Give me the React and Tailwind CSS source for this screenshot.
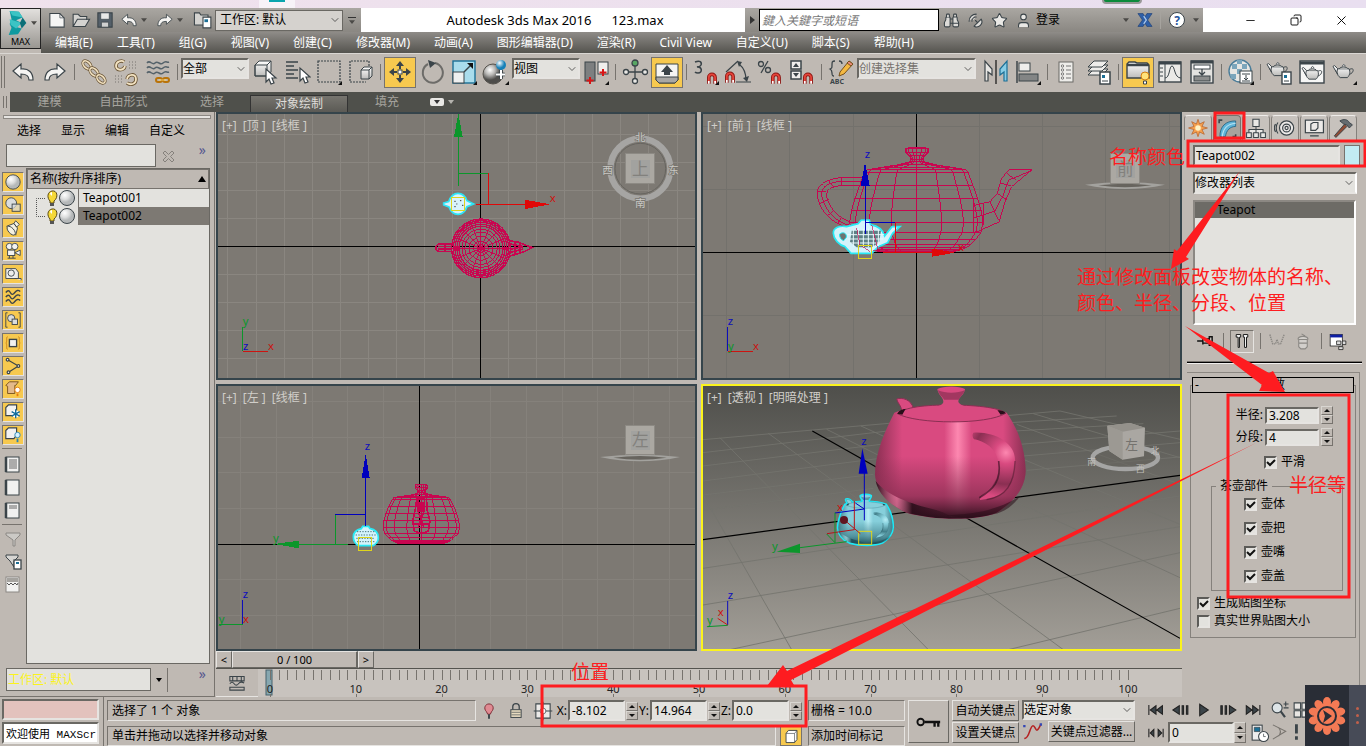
import { useState } from 'react';
import { Binoculars, SatelliteDish, Star, User, Minus, Copy, X, ChevronDown } from 'lucide-react';
import clsx from 'clsx';

const DARK = '#3b4449';
const PINK = '#c80650';

const MENUS = ['编辑(E)', '工具(T)', '组(G)', '视图(V)', '创建(C)', '修改器(M)', '动画(A)', '图形编辑器(D)', '渲染(R)', 'Civil View', '自定义(U)', '脚本(S)', '帮助(H)'];

const Svg = ({ size = 28, box = 28, className, children }) => (
  <svg width={size} height={size} viewBox={`0 0 ${box} ${box}`} fill="none" stroke={DARK} className={clsx('shrink-0', className)} aria-hidden="true">
    {children}
  </svg>
);

/* ---------- shared icon parts ---------- */

const Magnet = ({ x = 15, y = 15 }) => (
  <g transform={`translate(${x} ${y}) scale(.9)`}>
    <path d="M2 12V5a3.500 3.500 0 0 1 7 0v7" stroke="#8d1713" strokeWidth="4" />
    <path d="M2 9V5a3.500 3.500 0 0 1 7 0v4" stroke="#e5443a" strokeWidth="2" />
    <path d="M2 9v3M9 9v3" stroke="#fff" strokeWidth="2" />
  </g>
);

const Flyout = () => <path d="M27 23v4h-4z" fill="#111" stroke="none" />;

const ArrowShape = () => <path d="M4 13l8-7v5c8-1 12 4 12 11h-4c0-4-2-6-8-6v4z" fill="#f5f4f2" strokeWidth="1.200" />;

const Cursor = ({ x, y }) => <path transform={`translate(${x} ${y})`} d="M0 0v13l3-3 2 5 3-1-2-5h4z" fill="#fff" strokeWidth="1.200" />;

const Kettle = () => (
  <g fill="url(#metal)" strokeWidth="1.200">
    <path d="M7 12c-4-3-5-1-4 1s2 4 5 6M20 12c4-2 6-1 5 2s-4 4-6 4" fill="none" />
    <path d="M6 11l-4-4-2 1 6 10M6 11h14c2 4 1 8-2 11H9c-4-3-5-7-3-11z" />
    <path d="M8 11c1-3 9-3 11 0M12 8c0-3 3-3 3 0" />
  </g>
);

const ICONS = {
  undo: <ArrowShape />,
  redo: <g transform="translate(28 0) scale(-1 1)"><ArrowShape /></g>,
  link: (
    <g>
      {[[7, 7], [14, 14], [21, 21]].map(([x, y]) => (
        <g key={x} transform={`rotate(45 ${x} ${y})`}>
          <ellipse cx={x} cy={y} rx="5" ry="3" stroke="#6b5535" strokeWidth="3" />
          <ellipse cx={x} cy={y} rx="5" ry="3" stroke="#f3e3c2" strokeWidth="1.600" />
        </g>
      ))}
    </g>
  ),
  unlink: (
    <g>
      <path d="M13 8c-1 5-9 5-9 0s6-6 8-4M15 21c1-5 9-6 9 0s-6 6-9 4" stroke="#6b5535" strokeWidth="3.500" />
      <path d="M13 8c-1 5-9 5-9 0s6-6 8-4M15 21c1-5 9-6 9 0s-6 6-9 4" stroke="#f3e3c2" strokeWidth="1.800" />
      <path d="M17 4h8M17 7h8M17 10h8M3 18h8M3 21h8M3 24h8" stroke="#77736e" strokeDasharray="1 2" />
    </g>
  ),
  bind: (
    <g>
      {[5, 10, 15].map((y) => <path key={y} d={`M3 ${y}c3-4 5 3 8 0s5 3 8 0 4 0 6-1`} stroke="#55626a" strokeWidth="1.500" />)}
      <rect x="12" y="20" width="6" height="4" rx="2" stroke="#b97309" strokeWidth="2" />
      <rect x="19" y="20" width="6" height="4" rx="2" stroke="#b97309" strokeWidth="2" />
      <path d="M15 22h7" stroke="#ffd56a" />
    </g>
  ),
  select: (
    <g>
      <path d="M4 7l4-4h12v11l-4 4H4z" fill="url(#metal)" />
      <path d="M4 7h12v11H4zM16 7l4-4" />
      <Cursor x="15" y="11" />
    </g>
  ),
  byName: (
    <g>
      <path d="M3 4h12M3 8h8M3 12h12M3 16h8M3 20h12" strokeWidth="1.300" />
      <Cursor x="17" y="10" />
    </g>
  ),
  region: (
    <g>
      <rect x="3" y="3" width="22" height="21" strokeDasharray="2 1" strokeWidth="1.200" />
      <Flyout />
    </g>
  ),
  crossing: (
    <g>
      <path d="M22 8V3H3v21h16" strokeDasharray="2 1" strokeWidth="1.200" />
      <path d="M14 12l3-3h8v9l-3 3h-8zM14 12h8v9M22 12l3-3" fill="url(#metal)" />
    </g>
  ),
  move: (
    <g fill={DARK} stroke="none">
      <path d="M14 3l4 5h-3v3h-2V8h-3zM14 25l-4-5h3v-3h2v3h3zM3 14l5-4v3h3v2H8v3zM25 14l-5 4v-3h-3v-2h3v-3z" />
      <rect x="12" y="12" width="4" height="4" fill="#fff" stroke={DARK} />
    </g>
  ),
  rotate: (
    <g>
      <path d="M17 5a10 10 0 1 1-7 1" stroke="#6d6c69" strokeWidth="2" />
      <path d="M10 2l8 3-6 5z" fill={DARK} stroke="none" />
    </g>
  ),
  scale: (
    <g>
      <rect x="3" y="3" width="22" height="22" fill="#a9dcec" stroke="#1c6f96" strokeWidth="1.400" />
      <rect x="3" y="14" width="11" height="11" fill="#eef0f0" />
      <path d="M14 14l8-8" strokeWidth="1.500" />
      <path d="M17 5h6v6z" fill="#111" stroke="none" />
      <Flyout />
    </g>
  ),
  place: (
    <g>
      <circle cx="11" cy="16" r="10" fill="url(#darkBall)" stroke="#55524d" />
      <circle cx="19" cy="7" r="5" fill="url(#blueBall)" stroke="none" />
      <path d="M19 12v9M14 16.500h9" stroke="#3b4449" strokeWidth="3.500" />
      <path d="M19 12v9M14 16.500h9" stroke="#fff" strokeWidth="2" />
      <Flyout />
    </g>
  ),
  pivot: (
    <g>
      <rect x="3" y="4" width="10" height="19" fill="#7d7f80" />
      <rect x="16" y="4" width="10" height="12" fill="#f0efed" />
      <path d="M8 19v7M4.500 22.500h7M21 11v7M17.500 14.500h7" stroke="#d81515" strokeWidth="2" />
      <Flyout />
    </g>
  ),
  manipulate: (
    <g strokeWidth="1.300">
      <path d="M14 6v17M5 14h19" />
      <circle cx="14" cy="5" r="3" fill="#58a763" />
      <circle cx="5" cy="14" r="2.500" fill="#e9e8e5" />
      <circle cx="24" cy="14" r="2.500" fill="#e9e8e5" />
      <circle cx="14" cy="23" r="2.500" fill="#e9e8e5" />
    </g>
  ),
  keyboard: (
    <g>
      <path d="M3 6h22v16l-3 3H6l-3-3z" fill="#f5f5f3" />
      <path d="M3 19h22v3l-3 3H6l-3-3z" fill="#a8a7a4" />
      <path d="M14 7l6 7h-3v3h-6v-3H8z" fill={DARK} stroke="none" />
    </g>
  ),
  snap3: (
    <g>
      <path d="M3 4c5-2 7 0 6 3-1 2-2 2-4 2 5-1 6 6 1 6-1 0-2 0-3-1" strokeWidth="1.600" />
      <Magnet />
      <Flyout />
    </g>
  ),
  angle: (
    <g>
      <path d="M2 14L14 3M12 24h15M15 6c5 4 7 9 7 16" strokeWidth="1.200" />
      <path d="M13 3l5 1-3 5zM25 18l-2 6-4-4z" fill={DARK} stroke="none" />
      <Magnet x={1} y={14} />
    </g>
  ),
  percent: (
    <g>
      <circle cx="5" cy="6" r="2.500" strokeWidth="1.300" />
      <circle cx="12" cy="12" r="2.500" strokeWidth="1.300" />
      <path d="M12 3L5 15" strokeWidth="1.300" />
      <Magnet />
    </g>
  ),
  spinner: (
    <g>
      <rect x="3" y="3" width="10" height="8" fill="#efeeec" strokeWidth="1.500" />
      <rect x="3" y="13" width="10" height="8" fill="#efeeec" strokeWidth="1.500" />
      <path d="M8 5l3 4H5zM8 19l-3-4h6z" fill={DARK} stroke="none" />
      <Magnet />
    </g>
  ),
  named: (
    <g>
      <path d="M8 3c-3 0-3 1-3 4s0 3-2 4c2 1 2 2 2 4s0 3 2 3M12 3c2 0 3 1 3 3" strokeWidth="1.300" />
      <path d="M13 14l9-11 4 3-9 10-5 2z" fill="#f4b942" stroke="#77501b" />
      <path d="M22 3l4 3-2 2-4-3z" fill="#e98b7a" stroke="#77501b" />
      <text x="3" y="26" fontSize="7" fill={DARK} stroke="none" fontWeight="bold">ABC</text>
    </g>
  ),
  mirror: (
    <g strokeWidth="1.200">
      <path d="M14 2v24" stroke="#111" />
      <path d="M3 3v20h3v-9l4 3v-6z" fill="#e8e7e4" />
      <path d="M25 3v20h-3v-9l-4 3v-6z" fill="#88cde6" stroke="#1c6f96" />
    </g>
  ),
  align: (
    <g>
      <path d="M3 3v22" strokeWidth="1.500" />
      <rect x="5" y="5" width="11" height="8" fill="#eeedeb" />
      <rect x="5" y="16" width="19" height="7" fill="#838585" />
      <Flyout />
    </g>
  ),
  explorer: (
    <g>
      <rect x="6" y="4" width="14" height="20" fill="#eeedea" stroke="#6b6a67" />
      {[8, 12, 16, 20].map((y) => <g key={y}><circle cx="9.500" cy={y} r="1.200" stroke="#777" /><path d={`M13 ${y}h5`} stroke="#777" /></g>)}
    </g>
  ),
  layers: (
    <g>
      {[12, 8, 4].map((y) => <path key={y} d={`M3 ${y + 5}l6-6h14l-6 6z`} fill="#eeedeb" />)}
      <rect x="15" y="14" width="10" height="12" fill="#fff" strokeWidth="1.500" />
      <path d="M17 17h3v3h-3z" fill="#1c6f96" stroke="none" />
      <path d="M17 23h6" />
    </g>
  ),
  ribbon: (
    <g>
      <path d="M3 6l2-2h6l2 1h10l2 2v13H3z" fill="url(#metal)" strokeWidth="1.400" />
      <path d="M3 7h22" strokeWidth="2.500" />
      <circle cx="21" cy="18" r="4" fill="#ffe27a" stroke="#d47e10" />
      <path d="M19.500 23h3v3h-3z" fill="#fff" />
    </g>
  ),
  curve: (
    <g>
      <rect x="3" y="4" width="22" height="20" fill="#ebeae7" strokeWidth="1.400" />
      <path d="M3 5h22" strokeWidth="3" />
      <path d="M9 6v18M4 10h3M4 14h3M4 18h3M9 20c5 0 4-12 7-12s2 12 9 12" />
    </g>
  ),
  schematic: (
    <g>
      <rect x="3" y="3" width="22" height="22" fill="#e4e3e0" strokeWidth="1.400" />
      <path d="M3 4h22" strokeWidth="3" />
      <rect x="6" y="7" width="16" height="4" fill="#fff" />
      <rect x="6" y="18" width="16" height="5" fill="#8c8d8c" />
      <path d="M14 11v6M11 14l3 3 3-3" strokeWidth="1.300" />
    </g>
  ),
  material: (
    <g>
      <circle cx="13" cy="13" r="11" fill="#e7e6e3" stroke="#4b7d99" strokeWidth="1.400" />
      <path d="M5 6h5v5H5zM10 11h5v5h-5zM10 2h5v4h-5zM15 6h5v5h-5zM3 16h6v5H4zM15 16h5" fill="#7ba5bb" stroke="none" />
      <rect x="13" y="13" width="12" height="12" fill="#fff" />
      <path d="M15 16h8M19 17v5M17 20l2 2 2-2M15 23h8" />
      <Flyout />
    </g>
  ),
  renderSetup: (
    <g>
      <g transform="translate(1 0) scale(.8)"><Kettle /></g>
      <rect x="16" y="14" width="9" height="12" fill="#fff" strokeWidth="1.400" />
      <path d="M18 17h3v3h-3z" fill="#1c6f96" stroke="none" />
      <path d="M18 23h5" />
    </g>
  ),
  frameWindow: (
    <g>
      <rect x="2" y="3" width="24" height="22" fill="#f6f6f5" strokeWidth="1.400" />
      <path d="M2 5h24" strokeWidth="3" />
      <g transform="translate(4 4) scale(.78)"><Kettle /></g>
    </g>
  ),
  render: (
    <g>
      <g transform="translate(3 2) scale(.8)"><Kettle /></g>
      <Flyout />
    </g>
  ),
};

const TOOLBAR = [
  'undo', 'redo', '|', 'link', 'unlink', 'bind', '|', { value: '全部', label: '选择过滤器' },
  'select', 'byName', 'region', 'crossing', '|', 'move', 'rotate', 'scale', 'place', { value: '视图', label: '参考坐标系' },
  'pivot', '|', 'manipulate', 'keyboard', '|', 'snap3', 'angle', 'percent', 'spinner', '|', 'named',
  { value: '创建选择集', label: '命名选择集', wide: true },
  'mirror', 'align', '|', 'explorer', 'layers', '|', 'ribbon', 'curve', 'schematic', '|', 'material', '|',
  'renderSetup', 'frameWindow', 'render',
];

const ACTIVE = ['move', 'keyboard', 'ribbon'];

/* ---------- generic controls ---------- */

const Select = ({ value, label, className, selectClass }) => (
  <div className={clsx('relative flex', className)}>
    <select aria-label={label} className={clsx('w-full appearance-none text-xs leading-4 outline-none', selectClass)}>
      <option>{value}</option>
    </select>
    <ChevronDown size={12} strokeWidth={1.5} className="pointer-events-none absolute right-0.5 top-1/2 -translate-y-1/2 text-[#333]" />
  </div>
);

const Spinner = ({ label }) => (
  <span className="flex w-3 shrink-0 flex-col">
    {['M2 5l3-3 3 3z', 'M2 2l3 3 3-3z'].map((d, i) => (
      <button key={d} aria-label={`${label} ${i ? '-' : '+'}`} className="grid flex-1 place-items-center border border-[#d9d6d1] border-b-[#77736e] border-r-[#77736e] bg-[#bfb9b3]">
        <svg width="10" height="7" viewBox="0 0 10 7" className="block"><path d={d} fill="#111" /></svg>
      </button>
    ))}
  </span>
);

const sunkenEdge = 'border-2 border-[#6a6863] border-b-[#e6e4e1] border-r-[#e6e4e1]';
const sunken = 'border-2 border-[#6a6863] border-b-[#e6e4e1] border-r-[#e6e4e1] bg-[#e3e2de]';
const raised = 'border border-[#e6e4e1] border-b-[#6a6863] border-r-[#6a6863] bg-[#bfb9b3]';
const etched = 'border border-[#77736e] border-b-[#e6e4e1] border-r-[#e6e4e1]';

const Check = ({ children, defaultChecked = true, className }) => (
  <label className={clsx('flex items-center gap-1 text-xs leading-4', className)}>
    <span className="relative flex">
      <input type="checkbox" defaultChecked={defaultChecked} className="peer size-[13px] appearance-none border-2 border-[#5c5b58] border-b-[#e6e4e1] border-r-[#e6e4e1] bg-[#e3e2de]" />
      <svg width="13" height="13" viewBox="0 0 13 13" className="pointer-events-none absolute inset-0 opacity-0 peer-checked:opacity-100">
        <path d="M3 6l3 3 5-5" fill="none" stroke="#111" strokeWidth="2" />
      </svg>
    </span>
    {children}
  </label>
);

const Caret = () => <svg width="6" height="4" viewBox="0 0 8 5" className="shrink-0"><path d="M0 0h8L4 5z" fill="#4b4a47" /></svg>;

/* ---------- top bars ---------- */

const QuickAccess = () => (
  <div className="flex items-center bg-linear-to-b from-[#aaa7a2] to-[#8a8782] text-xs">
    <button aria-label="新建" className="w-6 pl-1.5"><Svg size={20}><path d="M4 5h14l6 6v13H4z" fill="#f5f5f4" strokeWidth="1.500" /><path d="M18 5v6h6" /></Svg></button>
    <button aria-label="打开" className="w-6 pl-1.5"><Svg size={20}><path d="M3 23V6h7l3 3h9v5M3 23l6-10h17l-6 10z" fill="#d4d3d0" strokeWidth="1.500" /></Svg></button>
    <button aria-label="保存" className="w-6 pl-1.5"><Svg size={20}><path d="M4 4h20v20H4z" fill="#55606a" strokeWidth="1.500" /><path d="M8 4h12v9H8z" fill="#e9e9e7" /><path d="M9 17h10v7H9z" fill="#cfd0d0" /></Svg></button>
    <button aria-label="撤消" className="w-6 pl-1.5"><Svg size={20}><ArrowShape /></Svg></button>
    <span className="w-3 pl-1"><Caret /></span>
    <button aria-label="重做" className="w-6 pl-1.5"><Svg size={20}>{ICONS.redo}</Svg></button>
    <span className="w-3 pl-1"><Caret /></span>
    <button aria-label="项目文件夹" className="w-[30px] pl-2"><Svg size={20}><path d="M2 4h7l2 3h10v14H2z" fill="#d4d3d0" strokeWidth="1.500" /><path d="M14 10h11v15H14z" fill="#fff" strokeWidth="1.500" /><path d="M16 13h5v4h-5z" fill="#1c6f96" stroke="none" /></Svg></button>
    <Select value="工作区: 默认" label="工作区" className="w-32" selectClass="h-[21px] border border-[#6a6863] bg-[#d5d2ce] pl-1" />
    <span className="flex w-[18px] flex-col items-center gap-0.5"><span className="h-px w-2 bg-[#333]" /><Caret /></span>
  </div>
);

const TitleBar = () => (
  <div className="flex h-6 items-stretch bg-white">
    <QuickAccess />
    <div className="flex flex-1 items-center justify-center gap-5 pl-1 text-[13px] leading-4">
      <span>Autodesk 3ds Max 2016</span>
      <span>123.max</span>
    </div>
    <div className="flex w-[458px] items-center bg-linear-to-b from-[#aaa7a2] to-[#8a8782] text-[#e9e8e6]">
      <button aria-label="展开" className="flex w-3.5 justify-center"><svg width="5" height="8"><path d="M0 0l5 4-5 4z" fill="#333" /></svg></button>
      <input aria-label="搜索" placeholder="鍵入关鍵字或短语" className="h-[22px] w-[180px] border border-black bg-white px-0.5 text-xs italic text-black outline-none placeholder:text-[#777]" />
      <button aria-label="搜索" className="flex w-6 justify-center"><Binoculars size={17} fill="#dcdbd8" color="#3b4449" strokeWidth={1.5} /></button>
      <button aria-label="通讯中心" className="flex w-6 justify-center"><SatelliteDish size={17} fill="#dcdbd8" color="#3b4449" strokeWidth={1.5} className="-scale-x-100" /></button>
      <button aria-label="收藏夹" className="flex w-6 justify-center"><Star size={17} fill="#e9e8e5" color="#3b4449" strokeWidth={1.5} /></button>
      <button className="flex w-28 items-center gap-1 pl-1 text-xs text-black"><User size={17} fill="#e9e8e5" color="#3b4449" strokeWidth={1.5} />登录</button>
      <Caret />
      <button aria-label="Exchange" className="flex w-8 justify-center border-r border-[#a6a39e]">
        <Svg size={18}><path d="M3 4h8l3 5 3-5h8l-7 10 7 10h-8l-3-5-3 5H3l7-10z" fill="#2e5fa8" stroke="#1d3e73" /><path d="M12 8l4 6-4 6" stroke="#a9c9ee" strokeWidth="2" /></Svg>
      </button>
      <button aria-label="帮助" className="ml-2 grid size-4 place-items-center rounded-full border border-[#3b4449] bg-white text-xs font-bold text-[#24549c]">?</button>
      <span className="ml-2"><Caret /></span>
    </div>
    <div className="flex w-[163px] items-center justify-between pl-[41px] pr-[17px]">
      <button aria-label="最小化"><Minus size={13} strokeWidth={1.5} /></button>
      <button aria-label="还原"><Copy size={12} strokeWidth={1.8} className="-scale-x-100" /></button>
      <button aria-label="关闭"><X size={15} strokeWidth={1.5} /></button>
    </div>
  </div>
);

const Header = () => (
  <header>
    <div className="flex h-2 items-end bg-linear-to-r from-[#f0e2ec] to-[#e9dff0] pl-[259px]">
      <span className="flex h-2 w-9 items-start justify-center bg-[#f7f3f8]"><span className="h-0.5 w-4 bg-[#0aa5ae]" /></span>
      <span className="ml-[807px] h-1 w-10 self-start rounded-b border-2 border-t-0 border-[#999] bg-[#0c8a3c]" />
    </div>
    <div className="flex">
      <button className="flex h-[41px] w-[41px] flex-col items-center justify-end border border-[#222] bg-linear-to-b from-[#e2e0dd] to-[#9a9792] leading-3">
        <span className="flex items-center">
          <Svg size={26}>
            <g stroke="none">
              <path d="M5 1l10 1 4 6-7 3 6 3-7 4 7 2-4 6-10 1 3-8-2-4 2-5z" fill="#0f9aa0" />
              <path d="M5 1l10 1 4 6-11-2zM5 10l13 4-6 6-6-4z" fill="#3cc4c4" />
              <path d="M19 8l4 6-5 6-2-6z" fill="#0b6f78" />
            </g>
          </Svg>
          <Caret />
        </span>
        <span className="text-[9px]">MAX</span>
      </button>
      <div className="min-w-0 flex-1">
        <TitleBar />
        <nav className="flex h-[21px] items-center gap-6 bg-linear-to-b from-[#8f8c88] to-[#55544f] pl-3.5 text-xs text-white">
          {MENUS.map((m) => <button key={m} className="whitespace-nowrap">{m}</button>)}
        </nav>
      </div>
    </div>
  </header>
);

const Toolbar = () => (
  <div className="flex h-[39px] items-center border-t border-[#dad7d3] pb-0.5">
    <span className="mr-px flex w-1.5 shrink-0 justify-center gap-0.5"><i className="h-8 w-px bg-[#77736e]" /><i className="h-8 w-px bg-[#77736e]" /></span>
    {TOOLBAR.map((item, i) => {
      if (item === '|') return <span key={i} className="mx-[3px] h-4 w-px shrink-0 bg-[#77736e]" />;
      if (typeof item === 'object') {
        return (
          <Select key={i} {...item} className={clsx('shrink-0 self-start', item.wide ? 'mr-1 mt-1 w-[119px] text-[#77736e]' : 'mt-1 w-[68px]')} selectClass={clsx('h-[21px]', sunken)} />
        );
      }
      return (
        <button key={i} aria-label={item} className={clsx('grid h-[31px] w-8 shrink-0 place-items-center', ACTIVE.includes(item) && 'border border-[#77736e] bg-[#f7c94f]')}>
          <Svg>{ICONS[item]}</Svg>
        </button>
      );
    })}
  </div>
);

const Ribbon = () => (
  <div className="flex h-5 items-center bg-[#4f504b] text-xs text-[#a6a49e]">
    <span className="flex h-full w-2.5 items-center justify-center gap-0.5 bg-[#bfb9b3]"><i className="h-3 w-px bg-[#77736e]" /><i className="h-3 w-px bg-[#77736e]" /></span>
    <button className="w-[63px] pl-4">建模</button>
    <button className="w-[101px]">自由形式</button>
    <button className="w-[76px]">选择</button>
    <button className="mt-[3px] h-[17px] w-[98px] border border-b-0 border-[#333] bg-linear-to-b from-[#77756f] to-[#5b5a55] leading-4 text-[#dedcd8]">对象绘制</button>
    <button className="w-[78px]">填充</button>
    <button aria-label="显示完整功能区" className="ml-1 flex h-2 w-3.5 items-center justify-center rounded-xs bg-[#e9e8e5]"><svg width="6" height="4"><path d="M0 0h6L3 4z" fill="#333" /></svg></button>
    <svg width="6" height="4" className="ml-1"><path d="M0 0h6L3 4z" fill="#b5b3ae" /></svg>
  </div>
);

/* ---------- scene explorer ---------- */

const Ball = () => <circle cx="10" cy="10" r="8" fill="url(#ball)" stroke={DARK} />;

const FILTERS = [
  <Ball />,
  <g fill="#d9dcdd"><circle cx="8" cy="8" r="6" /><rect x="9" y="9" width="9" height="8" fillOpacity=".7" /></g>,
  <g fill="#f4f0e0"><path d="M13 2l4 4-3 3-3-4zM3 8l8-3 4 5-2 8z" /><ellipse cx="8" cy="13" rx="3" ry="6" transform="rotate(-42 8 13)" /></g>,
  <g fill="#f3f3f1"><circle cx="6" cy="5" r="3.500" /><circle cx="12" cy="5" r="3.500" /><rect x="4" y="9" width="8" height="6" /><path d="M12 12l6-3v6zM4 18h9M6 15v3M10 15v3" /></g>,
  <g fill="#eeeeec"><path d="M2 4h11l3 4v7H2z" /><circle cx="8" cy="9" r="3.500" /><path d="M12 15h7v2" /></g>,
  <g strokeWidth="1.500">{[4, 9, 14].map((y) => <path key={y} d={`M2 ${y + 1}q3-4 5 0t5 0 6-1`} />)}</g>,
  <g fill="#d9dcdd"><path d="M4 2H2v16h2M16 2h2v16h-2" fill="none" /><circle cx="8" cy="8" r="4" /><rect x="9" y="9" width="6" height="6" /></g>,
  <g><path d="M4 3c-2 0 0 6-2 7 2 1 0 7 2 7M16 3c2 0 0 6 2 7-2 1 0 7-2 7" stroke="#c57a10" /><rect x="6" y="6" width="8" height="8" fill="#f2f1ef" strokeWidth="1.500" /></g>,
  <g fill="#fff" strokeWidth="1.300"><path d="M4 3l12 7-11 7" fill="none" /><circle cx="4" cy="3" r="1.500" /><circle cx="16" cy="10" r="1.500" /><circle cx="5" cy="17" r="1.500" /></g>,
  <g><path d="M2 6l4-4h10l-3 4h-1v9H4V7z" fill="#e3b98b" stroke="#77501b" /><circle cx="15" cy="11" r="3" fill="#fff" stroke="#e87a0c" /><path d="M14 15h2v3h-2z" fill="#e87a0c" stroke="none" /></g>,
  <g><path d="M2 5l3-3h9v8l-3 4H2z" fill="#f2f1ef" strokeWidth="1.300" /><circle cx="13" cy="12" r="4" fill="#fff" stroke="none" /><path d="M13 7v10M8.500 9.500l9 5M17.500 9.500l-9 5" stroke="#116c9c" strokeWidth="1.500" /></g>,
  <g><path d="M2 5l3-3h9v8l-3 4H2z" fill="#f2f1ef" strokeWidth="1.300" /><circle cx="15" cy="10" r="3" fill="#d8f1fb" stroke="#2a86b2" /><path d="M14 14h2v4h-2z" fill="#2a86b2" stroke="none" /></g>,
];

const Page = ({ lines }) => (
  <g><rect x="3" y="2" width="13" height="15" fill="#f1f1f0" /><path d="M3 2v15" strokeWidth="2.500" />{lines.map((y) => <path key={y} d={`M6 ${y}h8`} stroke="#666" />)}</g>
);

const VIEWS = [
  <Page lines={[5, 7, 9, 11, 13]} />,
  <Page lines={[]} />,
  <Page lines={[5, 7]} />,
  null,
  <path d="M3 4h14v2l-5 5v6h-2v-6L3 6z" fill="#cbc9c5" stroke="#8b8884" />,
  <g><path d="M3 3h12v2l-4 4v6L7 9 3 5z" fill="#d6d5d2" /><rect x="11" y="8" width="7" height="9" fill="#fff" strokeWidth="1.300" /><path d="M13 10h3v2h-3z" fill="#1c6f96" stroke="none" /></g>,
  <g><rect x="3" y="2" width="13" height="15" fill="#f1f1f0" stroke="#8b8884" /><path d="M4 3h11v4H4z" fill="#a5a39f" stroke="none" /><path d="M4 8l2 2 2-2 2 2 2-2 2 2 1-2" stroke="#555" /></g>,
];

const Bulb = () => (
  <svg width="12" height="17" viewBox="0 0 12 17"><path d="M4 11C1 8 1 2 6 1s7 6 2 10v2H4z" fill="#f5d838" stroke="#5b4a12" /><path d="M4 4c0-1 1-2 2-2v4z" fill="#fff" /><path d="M4 13h4v3H4z" fill="#555" /></svg>
);

const SceneExplorer = () => {
  const [selected, setSelected] = useState('Teapot002');
  return (
    <aside className="flex w-[215px] shrink-0 flex-col border-r border-[#77736e] pt-1 text-xs">
      <div className="mx-1 border-t-2 border-[#e6e4e1] outline outline-[#8c8883]" />
      <div className="flex gap-5 pb-[5px] pl-[17px] pt-[5px]">
        {['选择', '显示', '编辑', '自定义'].map((m) => <button key={m}>{m}</button>)}
      </div>
      <div className="flex items-start pl-1.5">
        <input aria-label="查找" className="h-[23px] w-[150px] border border-[#6a6863] bg-[#e3e2de] px-1" />
        <button aria-label="清除" className="ml-1.5 mt-1.5"><svg width="13" height="13" viewBox="0 0 13 13"><path d="M3 1l3.500 3.500L10 1l2 2-3.500 3.500L12 10l-2 2-3.500-3.500L3 12l-2-2 3.500-3.500L1 3z" fill="none" stroke="#85817c" /></svg></button>
        <span className="ml-auto mr-2 text-sm leading-3 text-[#56568e]">»</span>
      </div>
      <div className="mt-px flex flex-1">
        <div className="flex w-[26px] flex-col pl-0.5 pt-1">
          {FILTERS.map((icon, i) => (
            <button key={i} aria-label={`过滤 ${i + 1}`} className="mb-[3px] grid h-5 w-[22px] place-items-center border border-[#77736e] border-b-[#e6e4e1] border-r-[#e6e4e1] bg-[#f7c94f]"><Svg size={18} box={20}>{icon}</Svg></button>
          ))}
          <span className="mb-1.5 mr-1 border-t border-[#77736e]" />
          {VIEWS.map((icon, i) => icon
            ? <button key={i} aria-label={`视图 ${i + 1}`} className="mb-[3px] grid h-5 w-[22px] place-items-center"><Svg size={20} box={20}>{icon}</Svg></button>
            : <span key={i} className="mb-1 mr-1 border-t border-[#77736e]" />)}
        </div>
        <div className="mr-1 flex-1 border border-[#6a6863] bg-[#e3e2de]">
          <div className="flex h-5 items-center justify-between border border-[#77736e] bg-[#bfb9b3] pl-0.5 pr-0.5">名称(按升序排序)<svg width="8" height="6"><path d="M4 0l4 6H0z" /></svg></div>
          <div className="flex">
            <svg width="19" height="36"><path d="M18 9.500h-8.500v18h8.500" fill="none" stroke="#555" strokeDasharray="1 1" /></svg>
            <ul className="flex-1">
              {['Teapot001', 'Teapot002'].map((name) => (
                <li key={name} className="flex h-[18px] items-center">
                  <Bulb />
                  <Svg size={18} box={18} className="mr-0.5"><circle cx="9" cy="9" r="7.500" fill="url(#ball)" /></Svg>
                  <button onClick={() => setSelected(name)} className={clsx('h-full flex-1 border-l border-[#77736e] pl-1 text-left', name === selected && 'bg-[#7d7973]')}>{name}</button>
                </li>
              ))}
            </ul>
          </div>
        </div>
      </div>
      <div className="flex items-start border-b border-[#77736e] pb-1 pl-1.5 pt-1">
        <span className="flex h-[23px] w-[145px] items-center border border-[#6a6863] bg-[#e3e2de] pl-px text-[#fbf31c]">工作区: 默认</span>
        <button aria-label="工作区列表" className="flex h-6 w-[17px] items-center justify-center border-r border-[#77736e]"><svg width="6" height="4"><path d="M0 0h6L3 4z" /></svg></button>
        <span className="ml-auto mr-2 text-sm leading-3 text-[#56568e]">»</span>
      </div>
    </aside>
  );
};

/* ---------- viewports (scene units are a third of a pixel) ---------- */

const Viewport = ({ name, mode = '线框', active, children }) => (
  <section className={clsx('relative overflow-hidden border-2', active ? 'border-[#fbf31c] bg-linear-to-b from-[#4f4f4b] to-[#a29e97]' : 'border-[#35444b] bg-[#7d7973]')}>
    <svg className="absolute inset-0 size-full" fill="none" shapeRendering={active ? 'auto' : 'crispEdges'}>
      <g transform={`translate(-3 ${active || name === '左' ? -5 : -4}) scale(.33333)`} strokeWidth="3">{children}</g>
    </svg>
    <div className="relative flex gap-1.5 p-1 text-xs leading-4 text-[#d0cec9]">
      <button>[+]</button><button>[{name} ]</button><button>[{mode} ]</button>
    </div>
  </section>
);

const Grid = ({ x, y, step, cx, cy, color = '#8a8680' }) => (
  <g>
    {Array.from({ length: 24 }, (_, i) => <path key={i} d={`M${x + i * step} 0V900M0 ${y + i * step}H1500`} stroke={color} />)}
    <path d={`M${cx} 0V900M0 ${cy}H1500`} stroke="#000" />
  </g>
);

const AXIS = { x: '#cc1410', y: '#0b962b', z: '#0d0dbd' };

const Label = ({ a, x, y }) => <text x={x} y={y} fontSize="34" fill={AXIS[a]} stroke="none">{a}</text>;

const Tripod = ({ up, side, origin, y = 724 }) => (
  <g>
    <path d={`M83 ${y - 73}V${y}`} stroke={AXIS[up]} />
    <path d={side === 'y' ? `M12 ${y}H83` : `M83 ${y}H159`} stroke={AXIS[side]} />
    <Label a={up} x={83} y={y - 80} />
    <Label a={side} x={side === 'y' ? 11 : 159} y={y - 4} />
    <Label a={origin} x={84} y={y - 4} />
  </g>
);

const RINGS = [0, 0.38, 0.71, 0.92, 1];

const Lathe = ({ cx, levels }) => {
  const [first] = levels;
  return (
    <g stroke={PINK}>
      {levels.map(([y, w]) => <path key={y} d={`M${cx - w} ${y}H${cx + w}`} />)}
      {[-1, 1].map((s) => RINGS.map((r) => (
        <path key={`${s}${r}`} d={`M${cx + s * r * first[1]} ${first[0]}` + levels.map(([y, w]) => `L${cx + s * r * w} ${y}`).join('')} />
      )))}
    </g>
  );
};

const FRONT = [[178, 146], [187, 155], [227, 170], [265, 184], [301, 194], [337, 200], [367, 194], [388, 178], [403, 164], [412, 152], [419, 136], [425, 110]];
const FRONT_LID = [[112, 20], [117, 36], [128, 34], [138, 22], [148, 18], [156, 22], [165, 60], [172, 105], [178, 140]];
const LEFT = [[349, 82], [357, 88], [377, 98], [397, 106], [418, 112], [439, 115], [458, 110], [469, 98], [478, 90], [482, 82], [486, 72], [489, 58]];
const LEFT_LID = [[312, 18], [321, 19], [328, 12], [336, 12], [341, 24], [346, 60], [349, 80]];

const Cube = ({ face, x = 1232, y = 132 }) => (
  <g>
    <rect x={x} y={y} width="88" height="88" fill="#aba8a2" stroke="#8d8a84" />
    <rect x={x + 15} y={y + 17} width="57" height="56" fill="#a2a29f" />
    <text x={x + 19} y={y + 62} fontSize="50" fill="#82817d">{face}</text>
  </g>
);

const Disc = ({ y = 224 }) => (
  <g shapeRendering="auto">
    <path d={`M1155 ${y}Q1275 ${y - 14} 1395 ${y}Q1275 ${y + 26} 1155 ${y}`} fill="#a3a29e" />
    <path d={`M1195 ${y + 2}Q1275 ${y - 8} 1355 ${y + 2}Q1275 ${y + 14} 1195 ${y + 2}`} fill="#67645e" />
  </g>
);

const TopView = () => (
  <>
    <Grid x={39} y={73} step={84.2} cx={796} cy={409} />
    <circle cx="1276" cy="176" r="90" stroke="#a6a5a3" strokeWidth="19" shapeRendering="auto" />
    <circle cx="1276" cy="176" r="76" stroke="#66645f" shapeRendering="auto" />
    <Cube face="上" />
    {[['北', 1260, 92], ['南', 1260, 292], ['西', 1162, 192], ['东', 1360, 192]].map(([t, x, y]) => (
      <text key={t} x={x} y={y} fontSize="32" fill="#c9c8c4" stroke="#77746e" strokeWidth="4" paintOrder="stroke">{t}</text>
    ))}
    <g stroke={PINK}>
      {[88, 83, 78, 72, 66, 57, 49, 36, 22, 12].map((r) => <circle key={r} cx="798" cy="415" r={r} strokeWidth={r > 60 ? 4 : 3} />)}
      {Array.from({ length: 16 }, (_, i) => <path key={i} d="M798 415V327" transform={`rotate(${i * 22.5} 798 415)`} />)}
      <path d="M712 402h-40l-8 6v12l8 5h40M668 410h44M668 418h44M690 402v23M885 393l25 3 20 9 22 8-22 11-20 7-25 7M885 402l40 8-40 8M885 427l40-10M900 395v40M915 400v28" strokeWidth="5" />
    </g>
    <g shapeRendering="auto">
      <path d="M686 279l15-4c6-17 16-25 28-25s22 8 27 22l20 10-20 8c-6 16-15 23-27 23s-22-8-27-22l-16-6z" fill="#d8f2fc" stroke="#2ce5f5" strokeWidth="5" />
      <path d="M718 274h4M735 272h4M724 282h3M741 286h4M718 290h4" stroke="#333" />
    </g>
    <rect x="709" y="262" width="39" height="39" stroke="#dfd51c" />
    <path d="M730 227V75M730 190H820" stroke={AXIS.y} />
    <path d="M730 10l13 70h-26z" fill={AXIS.y} />
    <path d="M784 283H940M820 190V283" stroke="#e00808" />
    <path d="M1005 283l-75-14v28z" fill="#e00808" />
    <Label a="x" x={1004} y={276} />
    <Tripod up="y" side="x" origin="z" />
  </>
);

const FrontView = () => (
  <>
    <Grid x={80} y={49} step={189.6} cx={649} cy={427} color="#73716c" />
    <Disc />
    <Cube face="前" />
    <Lathe cx={649} levels={FRONT} />
    <Lathe cx={651} levels={FRONT_LID} />
    <g stroke={PINK}>
      <path d="M500 203H425C375 207 350 228 351 252C358 305 395 340 450 355M495 227H425C390 229 378 240 380 260C390 300 420 325 453 337M500 214H425C378 217 362 235 365 258C378 305 405 335 452 347M425 203v24M385 211l16 21M351 245h28M360 280l27-12M382 318l20-17M412 343l12-21" />
      <path d="M820 287l50-12 22-25 12-43 22-27h69l-60 50-18 40-20 66-70 31M820 325l65-22 25-48 16-45 69-28M820 367V280M852 280v65M870 275l25 55M892 250l30 20M904 220l30 8M920 190l28 20" />
    </g>
    <g shapeRendering="auto">
      <path d="M484 330h24l4 14c22 4 36 12 42 34l22-28h24l-22 20-15 28-28 12-20 20h-62l-18-20c-18-5-34-22-35-40s20-24 40-20l34-9z" fill="#d4f3fb" stroke="#28eaf6" strokeWidth="5" />
      <path d="M419 372c10-8 22-2 20 10l-8 10c-8-2-14-12-12-20z" fill="#6d7472" stroke="#28eaf6" />
      <path d="M455 362h88l-6 36-22 14h-45l-20-16z" fill="#5c8085" />
      <path d="M442 374h110M445 387h105M450 399h90M460 360v50M475 356v56M490 356v56M505 356v56M520 356v56M535 360v48" stroke="#e9fafd" />
    </g>
    <path d="M520 422H780M470 355l10 50 30 20M515 345l20 80" stroke={PINK} strokeWidth="2" />
    <rect x="475" y="406" width="40" height="40" stroke="#dfd51c" />
    <path d="M496 372V220M496 338H586" stroke="#0000be" />
    <path d="M495 158l14 70h-27z" fill="#0000be" />
    <path d="M586 338V427M548 427H700" stroke="#e00808" />
    <path d="M766 428l-70-12v24z" fill="#e00808" />
    <Label a="z" x={494} y={144} />
    <Label a="x" x={774} y={424} />
    <Tripod up="z" side="x" origin="y" />
  </>
);

const LeftView = () => (
  <>
    <Grid x={77} y={61} step={107.2} cx={613} cy={490} color="#85817b" />
    <Disc y={228} />
    <Cube face="左" y={134} />
    <Lathe cx={619} levels={LEFT} />
    <Lathe cx={619} levels={LEFT_LID} />
    <path d="M606 350h28l3 40 8 30-5 30-21 8-21-8-5-30 8-35z" stroke={PINK} strokeWidth="5" />
    <path d="M609 355h20v35h-20zM609 390l18 50M627 390l-18 50M595 430h50M600 410h40" stroke={PINK} strokeWidth="5" />
    <path d="M609 362h20v28h-20z" fill={PINK} />
    <g shapeRendering="auto">
      <path d="M443 436h18l3 6c15 3 26 12 26 28s-10 20-16 24h-44c-8-5-15-12-15-26s10-22 24-25z" fill="#d4f3fb" stroke="#28eaf6" strokeWidth="5" />
      <path d="M426 452h52M422 462h60M424 472h56M426 482h52" stroke="#477279" strokeDasharray="4 4" />
    </g>
    <rect x="430" y="469" width="40" height="39" stroke="#dfd51c" />
    <path d="M452 434V285M452 401H361" stroke="#0000be" />
    <path d="M452 219l12 72h-24z" fill="#0000be" />
    <path d="M361 401V490M398 490H250" stroke={AXIS.y} />
    <path d="M178 489l74-10v23z" fill={AXIS.y} />
    <Label a="z" x={449} y={207} />
    <Label a="y" x={174} y={482} />
    <Tripod up="z" side="y" origin="x" y={730} />
  </>
);

const POT_BODY = 'M583 95C555 150 525 215 525 280C530 340 575 375 620 395C700 418 830 420 890 395C930 370 975 330 977 270C975 190 945 130 920 95C850 65 650 65 583 95Z';

const ShadedPot = ({ id, light, base, dark, deep }) => (
  <g>
    <defs>
      <linearGradient id={`${id}-body`} x1="0" x2="1" y1="0" y2="0">
        <stop offset="0" stopColor={dark} /><stop offset=".18" stopColor={base} /><stop offset=".46" stopColor={base} /><stop offset=".55" stopColor={light} /><stop offset=".64" stopColor={base} /><stop offset=".85" stopColor={base} /><stop offset="1" stopColor={dark} />
      </linearGradient>
      <linearGradient id={`${id}-shade`} x1="0" x2="0" y1="0" y2="1">
        <stop offset=".45" stopColor={dark} stopOpacity="0" /><stop offset=".8" stopColor={dark} stopOpacity=".75" /><stop offset="1" stopColor={deep} />
      </linearGradient>
      <radialGradient id={`${id}-handle`} gradientUnits="userSpaceOnUse" cx="918" cy="215" r="135">
        <stop offset="0" stopColor={light} /><stop offset=".25" stopColor={base} /><stop offset=".7" stopColor={dark} /><stop offset="1" stopColor={base} />
      </radialGradient>
      <linearGradient id={`${id}-foot`} x1="0" x2="1">
        <stop offset="0" stopColor={deep} /><stop offset=".28" stopColor={light} stopOpacity=".6" /><stop offset=".48" stopColor={deep} stopOpacity=".9" /><stop offset="1" stopColor={deep} stopOpacity=".3" />
      </linearGradient>
    </defs>
    <path d="M590 54c16-6 44 2 50 28l-35 8c-1-18-12-22-15-36z" fill={base} stroke={dark} />
    <path d={POT_BODY} fill={`url(#${id}-body)`} />
    <path d={POT_BODY} fill={`url(#${id}-shade)`} />
    <path d="M527 300C560 345 640 370 700 385C730 394 745 400 755 410C700 410 660 404 620 395C570 372 535 340 527 300Z" fill={`url(#${id}-foot)`} />
    <path d="M740 402C820 402 900 385 960 345C940 375 910 395 880 400C830 412 780 412 740 402Z" fill={deep} fillOpacity=".55" />
    <path d="M592 98C620 74 700 72 752 72C810 72 900 78 917 97C860 132 650 130 592 98Z" fill={base} stroke={dark} strokeWidth="3" />
    <path d="M592 98c5-12 20-14 25-15l-10 18zM917 97c-5-10-20-8-25-10l10 14z" fill={deep} />
    <path d="M712 24C730 14 778 14 795 24C794 42 775 48 775 62C778 70 790 74 800 78H708C718 74 730 70 730 62C730 48 714 42 712 24Z" fill={base} />
    <path d="M714 28c20 10 60 10 80 0-2 10-14 20-18 28h-44c-4-8-16-16-18-28z" fill={dark} fillOpacity=".7" />
    <path d="M820 155C880 150 945 185 945 235C945 310 920 350 840 357C838 340 900 320 896 250C892 200 850 180 822 175C817 168 816 160 820 155Z" fill={`url(#${id}-handle)`} />
    <path d="M838 350C880 325 905 300 896 240" stroke={deep} strokeWidth="5" strokeOpacity=".6" />
    <path d="M945 240C943 310 918 346 860 356" stroke={deep} strokeWidth="4" strokeOpacity=".4" />
  </g>
);

const FLOOR = [
  'M9 562L1440 345', 'M9 672L1440 437', 'M90 806L1440 515', 'M925 806L1440 682', 'M9 388L520 322', 'M9 342L520 280', 'M9 300L540 232', 'M9 255L560 188', 'M9 215L580 148', 'M9 176L590 125',
  'M920 104L1080 90', 'M930 125L1250 105', 'M945 150L1330 128', 'M960 190L1440 150', 'M970 225L1440 185', 'M980 268L1440 228',
  'M9 342L275 806', 'M60 170L685 806', 'M205 157L1090 806', 'M483 135L560 170', 'M900 340L1440 590', 'M970 235L1440 430', 'M950 130L1440 310', 'M1000 98L1440 230', 'M1080 90L1440 175', 'M380 145L540 225',
];

const PerspectiveView = () => (
  <>
    {FLOOR.map((d) => <path key={d} d={d} stroke="#74736e" strokeWidth="2.500" />)}
    <path d="M337 150L1440 772M9 476L1440 283" stroke="#000" strokeWidth="3.500" />
    <ShadedPot id="big" light="#fd88b0" base="#d94a80" dark="#8a2f52" deep="#2a0e1a" />
    <g transform="translate(226 336) scale(.36 .375)">
      <path d={POT_BODY} stroke="#1ceaf8" strokeWidth="26" />
      <path d="M590 54c16-6 44 2 50 28l-35 8c-1-18-12-22-15-36zM712 24C730 14 778 14 795 24C794 42 775 48 775 72H730C730 48 714 42 712 24Z" stroke="#1ceaf8" strokeWidth="24" strokeLinejoin="round" />
      <ShadedPot id="small" light="#b5ecf4" base="#86cfdb" dark="#43808b" deep="#1d4d57" />
    </g>
    <rect x="476" y="451" width="39" height="39" stroke="#dfd51c" />
    <path d="M493 418V270M466 366l27 18M493 384l-88 12" stroke="#0000be" />
    <path d="M487 202l16 76h-27z" fill="#0000be" />
    <path d="M463 360v86l-82 12M425 410l56 48" stroke="#b81216" />
    <circle cx="432" cy="417" r="12" fill="#5f1520" />
    <path d="M405 395v90l-25-26M440 482L300 500" stroke={AXIS.y} />
    <path d="M230 512l70-24v28z" fill={AXIS.y} />
    <ellipse cx="1276" cy="230" rx="98" ry="34" stroke="#a5a5a4" strokeWidth="13" fill="#65635e" fillOpacity=".5" />
    <path d="M1222 134l68-8 45 14-3 86-64 10-40-26z" fill="#aaa7a2" />
    <path d="M1222 134l46 18v84l-40-26z" fill="#9c9993" />
    <path d="M1222 134l68-8 45 14-67 12z" fill="#94918b" />
    <text x="1276" y="204" fontSize="38" fill="#74726e">左</text>
    <g fontSize="26" fill="#c0bfbb"><text x="1308" y="272">西</text><text x="1352" y="218">北</text><text x="1162" y="252">南</text></g>
    <Label a="z" x={484} y={192} />
    <Label a="x" x={411} y={390} />
    <Label a="y" x={216} y={506} />
    <path d="M83 660V732" stroke={AXIS.z} /><path d="M83 732L53 712" stroke={AXIS.x} /><path d="M83 733L22 737" stroke={AXIS.y} />
    <Label a="z" x={83} y={654} /><Label a="x" x={53} y={704} /><Label a="y" x={21} y={730} />
  </>
);

const TimeLine = () => (
  <div>
    <div className="flex h-[18px] items-stretch border-b border-[#55544f] text-[11px] leading-4">
      <button className={clsx('w-4 leading-3', raised)}>&lt;</button>
      <button className={clsx('w-[126px] border-r-2', raised)}>0 / 100</button>
      <button className={clsx('w-4 leading-3', raised)}>&gt;</button>
    </div>
    <div className="flex h-7 border-b border-[#e6e4e1] text-[11px]">
      <button aria-label="打开迷你曲线编辑器" className="grid w-[42px] place-items-center"><Svg size={20}><path d="M4 5h20v6H4zM4 20h20v4H4zM8 5v6M14 5v6M20 5v6M4 15q3-4 6 0t6 0 8-1" strokeWidth="1.500" /></Svg></button>
      <svg className="flex-1 bg-[#c8c3be]" height="28" viewBox="0 0 925 28" preserveAspectRatio="xMinYMid slice">
        <rect x="8" y="1" width="6" height="25" fill="#86a7b0" stroke="#46626c" />
        {Array.from({ length: 101 }, (_, i) => {
          const x = 12 + Math.round(i * 8.58);
          return <path key={i} d={i % 10 ? `M${x}.500 1V11` : `M${x}.500 1V11M${x}.500 25V28`} stroke="#77736e" />;
        })}
        {Array.from({ length: 11 }, (_, i) => <text key={i} x={12 + i * 85.8} y="24" textAnchor="middle" fontSize="11" fill="#222">{i * 10}</text>)}
      </svg>
    </div>
  </div>
);

/* ---------- command panel ---------- */

const PANEL_TABS = [
  ['创建', <g><path d="M14 3l2 6 6-3-3 6 7 2-7 2 3 6-6-3-2 6-2-6-6 3 3-6-7-2 7-2-3-6 6 3z" fill="#f7a24f" stroke="#b8652e" /><circle cx="14" cy="14" r="3.500" fill="#fff3c4" stroke="none" /></g>],
  ['修改', <g><path d="M5 25C5 12 12 5 25 5v7c-7 0-12 5-13 13z" fill="#5fb4d8" stroke="#1c5d80" /><path d="M8 25C9 14 14 9 25 8" stroke="#b7e2f2" strokeWidth="1.500" /><path d="M4 8V4h4M25 22v3h-4" strokeWidth="2" /></g>],
  ['层次', <g fill="#e9e8e5" strokeWidth="1.300"><path d="M10 3h8v9h-8zM14 12v4M5 20v-4h18v4" /><path d="M2 20h6v6H2zM11 20h6v6h-6zM20 20h6v6h-6zM14 16v4" /></g>],
  ['运动', <g strokeWidth="1.500"><circle cx="16" cy="14" r="9" fill="#eceae8" /><circle cx="16" cy="14" r="5" /><circle cx="16" cy="14" r="2" /><path d="M5 7c-3 4-3 10 0 14M2 9c-2 3-2 7 0 10" /></g>],
  ['显示', <g strokeWidth="1.500"><rect x="3" y="4" width="23" height="16" fill="#eceae8" /><path d="M10 9l3-2h6v7l-3 3h-6zM9 24h11" /></g>],
  ['实用程序', <g strokeWidth="1.200"><path d="M16 9L3 24l2 2L19 12z" fill="#8f4a34" /><path d="M10 5c5-3 10-2 12 2l4 3-4 4-3-4-4-1z" fill="#646b70" /></g>],
];

const Field = ({ label, value }) => (
  <label className="flex items-center justify-end gap-0.5">{label}<input defaultValue={value} className={clsx('h-[17px] w-[54px] px-0.5', sunken)} /><Spinner label={label} /></label>
);

const CommandPanel = () => (
  <aside className="flex w-[183px] shrink-0 flex-col pt-[3px] text-xs leading-4">
    <div className="flex gap-px pl-px">
      {PANEL_TABS.map(([label, icon], i) => (
        <button key={label} aria-label={label} className={clsx('grid h-[25px] w-7 place-items-center rounded-t border border-b-0', i === 1 ? 'border-[#77736e] bg-[#a8a39d]' : 'border-[#85817c] border-t-[#eeecea] bg-[#c7c2bd]')}><Svg size={22}>{icon}</Svg></button>
      ))}
    </div>
    <div className="flex flex-col gap-1.5 pl-2.5 pr-1.5 pt-[5px]">
      <div className="flex gap-1">
        <input aria-label="名称" defaultValue="Teapot002" className={clsx('h-[21px] w-[147px] px-px outline-none', sunken)} />
        <button aria-label="颜色" className="h-[21px] w-[18px] border border-[#77736e] bg-[#c2ecf3]" />
      </div>
      <Select value="修改器列表" label="修改器列表" className="mr-[3px]" selectClass="h-[22px] border-2 border-[#6a6863] border-b-[#e6e4e1] border-r-[#fff] bg-[#e3e2de]" />
      <div className="mr-1 h-[125px] border-2 border-[#8c8883] border-b-[#fff] border-r-[#fff] bg-[#e3e2de]">
        <button className="block h-4 w-full bg-[#6d6b66] pl-[22px] text-left leading-4">Teapot</button>
      </div>
    </div>
    <div className="flex h-8 items-center pl-3">
      <button aria-label="锁定堆栈" className="w-7"><Svg size={20}><path d="M3 14h8M11 9v10M11 11h9M11 17h9M20 8v12h4V8z" strokeWidth="2" stroke="#111" /></Svg></button>
      <span className="h-4 w-px bg-[#77736e]" />
      <button aria-label="显示最终结果" className={clsx('ml-1.5 grid h-[23px] w-6 place-items-center', etched)}><Svg size={18}><path d="M5 4h7v4h-2v16H8V8H5zM16 4h7v4h-2v16h-3V8h-2z" fill="#fff" strokeWidth="1.500" stroke="#111" /></Svg></button>
      <span className="ml-1.5 h-4 w-px bg-[#77736e]" />
      <button aria-label="使唯一" className="w-7 pl-1.5"><Svg size={20}><path d="M4 5l4 13h4l2-6 2 6h3l5-13" stroke="#8b8884" strokeWidth="2" strokeDasharray="2 1" /></Svg></button>
      <button aria-label="移除修改器" className="w-8 pl-1"><Svg size={20}><path d="M8 12h12v10l-3 3h-6l-3-3zM7 12c0-6 14-6 14 0M12 4l5 3M8 17h12" stroke="#8b8884" strokeWidth="1.500" fill="#d2cfcb" /></Svg></button>
      <span className="h-4 w-px bg-[#77736e]" />
      <button aria-label="配置修改器集" className="pl-1.5"><Svg size={20}><rect x="3" y="5" width="17" height="16" fill="#fff" stroke="#111" /><path d="M3 7h17" stroke="#0f1fa4" strokeWidth="4" /><path d="M12 14h6v5h-6zM20 14h5v5h-5zM15 22h6v4h-6z" fill="#ddd" stroke="#111" /></Svg></button>
    </div>
    <div className="ml-1 mr-1 mt-1 h-[3px] border-b border-t border-b-[#f0eeec] border-t-[#77736e] bg-black" />
    <div className="ml-1 mr-1.5 mt-2 flex-1 border-r border-t border-[#8c8883] px-[3px] pt-1">
      <div className="relative px-0.5"><button className="flex h-4 w-full items-center border border-black bg-[#bfb9b3] px-0.5"><span>-</span><span className="flex-1 pr-1 text-center">参数</span></button></div>
      <div className="-mt-2 border border-[#85817c] pb-2 pl-1.5 pr-1.5 pt-5">
        <div className="flex flex-col gap-1 pr-4">
          <Field label="半径:" value="3.208" />
          <Field label="分段:" value="4" />
        </div>
        <Check className="mt-2 pl-[67px]">平滑</Check>
        <fieldset className="ml-3.5 mr-1.5 mt-2 border border-[#85817c] pb-0.5 pl-8 pt-0.5">
          <legend className="-ml-7 px-1">茶壶部件</legend>
          <div className="flex flex-col gap-2 pb-1">
            {['壶体', '壶把', '壶嘴', '壶盖'].map((p) => <Check key={p}>{p}</Check>)}
          </div>
        </fieldset>
        <Check className="mt-1">生成贴图坐标</Check>
        <Check defaultChecked={false} className="mt-0.5">真实世界贴图大小</Check>
      </div>
    </div>
  </aside>
);

/* ---------- status bar ---------- */

const Play = ({ d, label }) => (
  <button aria-label={label} className="grid w-6 place-items-center"><Svg size={20}><path d={d} fill={DARK} strokeWidth="1.500" stroke="#222" /></Svg></button>
);

const StatusBar = () => (
  <footer className="flex h-[49px] shrink-0 text-xs leading-4">
    <div className="flex w-[104px] flex-col gap-0.5 border-r border-[#77736e] pl-0.5 pr-1 pt-0.5">
      <input aria-label="MAXScript 宏录制器" className={clsx('h-[21px] w-full bg-[#e3c2bd]', sunkenEdge)} />
      <input aria-label="MAXScript 侦听器" defaultValue="欢迎使用 MAXScr" className={clsx("h-[22px] w-full bg-white pl-0.5 font-['Liberation_Mono','Noto_Sans_CJK_SC',monospace] text-[11px]", sunkenEdge)} />
    </div>
    <div className="flex min-w-0 flex-1 flex-col justify-between pl-[3px] pt-[3px]">
      <div className="flex h-[21px] items-stretch">
        <p className={clsx('flex min-w-0 flex-1 items-center pl-1', etched)}>选择了 1 个 对象</p>
        <button aria-label="提示" className="grid w-[26px] place-items-center"><Svg size={18}><path d="M10 15C5 10 8 3 14 3s9 7 4 12l-2 4h-4z" fill="#e08a92" stroke="#7c2b33" strokeWidth="1.500" /><path d="M14 19v7" strokeWidth="3" /></Svg></button>
        <button aria-label="选择锁定" className="grid w-[27px] place-items-center"><Svg size={18}><path d="M9 12V7c0-6 10-6 10 0v5" strokeWidth="2" /><rect x="6" y="12" width="16" height="12" fill="#e8dcc0" strokeWidth="1.500" /><path d="M7 16h14M7 20h14" /></Svg></button>
        <button aria-label="绝对模式" className="grid w-[27px] place-items-center"><Svg size={20}><path d="M4 4h20v20H4zM14 1v26M1 14h26" fill="#eceae8" strokeWidth="1.500" /><circle cx="14" cy="14" r="4" fill="#fff" /></Svg></button>
        {[['X:', '-8.102'], ['Y:', '14.964'], ['Z:', '0.0']].map(([l, v]) => (
          <label key={l} className="flex w-[82px] items-center justify-end gap-px">{l}<input defaultValue={v} className={clsx('h-[21px] w-[57px] px-0.5', sunken)} /><span className="flex h-[17px]"><Spinner label={l} /></span></label>
        ))}
        <p className={clsx('ml-1.5 flex w-[97px] items-center pl-0.5', etched)}>栅格 = 10.0</p>
      </div>
      <div className="flex h-5 items-stretch">
        <p className={clsx('flex min-w-0 flex-1 items-center pl-1', etched)}>单击并拖动以选择并移动对象</p>
        <button aria-label="自适应降级" className="ml-1 grid w-[22px] place-items-center border border-[#77736e] bg-[#f7c94f]"><Svg size={17}><path d="M5 9l4-5h14v15l-4 5H5z" fill="#fff" strokeWidth="1.500" /><path d="M5 9h14v15M19 9l4-5" /></Svg></button>
        <p className={clsx('ml-1.5 flex w-[97px] items-center pl-0.5', etched)}>添加时间标记</p>
      </div>
    </div>
    <div className="flex w-[461px] shrink-0 gap-[3px] pb-[3px] pl-[3px] pt-[3px]">
      <button aria-label="设置关键点" className={clsx('grid w-[41px] place-items-center', raised)}><Svg size={26}><circle cx="5" cy="14" r="3.500" strokeWidth="2" stroke="#111" /><path d="M9 14h17M20 14v5M24 14v5" strokeWidth="2.500" stroke="#111" /></Svg></button>
      <div className="flex w-[67px] flex-col justify-between">
        <button className={clsx('h-[21px] leading-4', raised)}>自动关键点</button>
        <button className={clsx('h-[21px] leading-4', raised)}>设置关键点</button>
      </div>
      <div className="flex w-[113px] flex-col justify-between">
        <Select value="选定对象" label="选择集" selectClass={clsx('h-5', sunken)} />
        <div className="flex">
          <Svg size={22}><path d="M3 22c6 2 7-16 11-16s3 14 10-2" stroke="#b52222" strokeWidth="2" /><path d="M3 5v3M24 3v3" stroke="#3447b5" strokeWidth="3" /></Svg>
          <button className={clsx('ml-1 h-[21px] flex-1 whitespace-nowrap', raised)}>关键点过滤器...</button>
        </div>
      </div>
      <div className="flex flex-1 flex-col justify-between pl-1.5">
        <div className="flex h-5">
          <Play label="转至开头" d="M4 7v14M14 8l-8 6 8 6zM23 8l-8 6 8 6z" />
          <Play label="上一帧" d="M13 8l-9 6 9 6zM17 8v12h2V8zM23 8v12h2V8z" />
          <Play label="播放" d="M8 6l12 8-12 8z" />
          <Play label="下一帧" d="M4 8v12h2V8zM10 8v12h2V8zM16 8l9 6-9 6z" />
          <Play label="转至结尾" d="M25 7v14M15 8l8 6-8 6zM6 8l8 6-8 6z" />
          <button aria-label="缩放" className="ml-1 grid w-6 place-items-center"><Svg size={20}><circle cx="10" cy="11" r="7" fill="#dde4e7" strokeWidth="1.500" /><path d="M15 16l6 8" strokeWidth="3" /><path d="M22 2v7M19 5.500h7M19 11h7" strokeWidth="1.500" /></Svg></button>
          <Svg size={20}><path d="M3 4h9v9H3zM14 4h9v9h-9zM3 15h9v9H3zM14 15h9v9h-9z" fill="#e8e6e3" strokeWidth="1.500" /></Svg>
        </div>
        <div className="flex h-[21px]">
          <Play label="关键点模式" d="M4 8v12M11 9l-5 5 5 5zM17 9l5 5-5 5zM24 8v12" />
          <input aria-label="当前帧" defaultValue="0" className={clsx('w-[66px] px-0.5', sunken)} />
          <Spinner label="帧" />
          <button aria-label="时间配置" className="ml-1 grid w-5 place-items-center"><Svg size={20}><rect x="3" y="3" width="14" height="21" fill="#eee" strokeWidth="1.500" /><path d="M6 6h8v6H6z" fill="#1c6f96" /><circle cx="19" cy="19" r="7" fill="#fff" strokeWidth="1.500" /><path d="M19 15v4h3" /></Svg></button>
          <Svg size={20}><path d="M4 4l18 9L4 24M12 8c4 4 3 8 0 12" strokeWidth="1.500" stroke="#77736e" /></Svg>
          <Svg size={20}><path d="M9 3v13M9 20v5" strokeWidth="4" /></Svg>
        </div>
      </div>
    </div>
  </footer>
);

/* ---------- tutorial mark-up drawn over the window ---------- */

const Notes = () => (
  <svg className="pointer-events-none absolute inset-0 size-full" fill="#fe1c20" fontSize="19">
    <g fill="none" stroke="#fe1c20" strokeWidth="3">
      <rect x="1215" y="113" width="29" height="25" />
      <rect x="1188" y="141" width="177" height="25" />
      <rect x="1228" y="395" width="121" height="202" />
      <rect x="542" y="686" width="264" height="40" />
    </g>
    <path d="M1240 171L1186 257L1189 259L1171 269L1174 249L1177 251Z" />
    <path d="M1185 326L1269 373L1273 371L1285 392L1259 391L1262 385Z" />
    <path d="M1256 443L791 680L794 685L767 686L783 665L787 671Z" />
    <text x="1109" y="164">名称颜色</text>
    <text x="1077" y="284">通过修改面板改变物体的名称、</text>
    <text x="1077" y="310">颜色、半径、分段、位置</text>
    <text x="1289" y="492">半径等</text>
    <text x="571" y="679">位置</text>
  </svg>
);

const Recorder = () => (
  <div className="absolute bottom-0 right-0 flex h-[61px] w-[61px] bg-[#292d36]">
    <svg width="44" height="61" viewBox="0 0 44 61">
      <g fill="#f47a55">
        {Array.from({ length: 10 }, (_, i) => <ellipse key={i} cx="22" cy="17" rx="4" ry="5" transform={`rotate(${i * 36} 22 31)`} />)}
        <circle cx="22" cy="31" r="13" />
      </g>
      <circle cx="22" cy="31" r="9" fill="none" stroke="#292d36" strokeWidth="2" />
      <path d="M18 25l9 6-9 7 2-7z" fill="#292d36" />
    </svg>
    <div className="flex flex-1 flex-col items-center justify-center gap-1 bg-[#474b57]">
      {[0, 1, 2].map((i) => <i key={i} className="size-[3px] rounded-full bg-[#c2604a]" />)}
    </div>
  </div>
);

export default function App() {
  return (
    <div className="relative flex min-h-screen w-full flex-col overflow-hidden bg-[#bfb9b3] font-['Noto_Sans','Noto_Sans_CJK_SC',sans-serif] text-black">
      <svg width="0" height="0" className="absolute" aria-hidden="true">
        <defs>
          <radialGradient id="ball" cx=".35" cy=".3"><stop offset="0" stopColor="#fff" /><stop offset=".6" stopColor="#dcdddd" /><stop offset="1" stopColor="#b5b8b9" /></radialGradient>
          <radialGradient id="darkBall" cx=".35" cy=".3"><stop offset="0" stopColor="#fff" /><stop offset=".5" stopColor="#b9b8b6" /><stop offset="1" stopColor="#4e4d4b" /></radialGradient>
          <radialGradient id="blueBall" cx=".35" cy=".3"><stop offset="0" stopColor="#fff" /><stop offset="1" stopColor="#1580b8" /></radialGradient>
          <linearGradient id="metal" x1="0" y1="0" x2="0" y2="1"><stop offset="0" stopColor="#fff" /><stop offset="1" stopColor="#bcbcba" /></linearGradient>
        </defs>
      </svg>
      <Header />
      <Toolbar />
      <Ribbon />
      <div className="flex flex-1">
        <SceneExplorer />
        <main className="flex min-w-0 flex-1 flex-col px-px">
          <div className="grid flex-1 grid-cols-2 grid-rows-2 gap-1">
            <Viewport name="顶"><TopView /></Viewport>
            <Viewport name="前"><FrontView /></Viewport>
            <Viewport name="左"><LeftView /></Viewport>
            <Viewport name="透视" mode="明暗处理" active><PerspectiveView /></Viewport>
          </div>
          <TimeLine />
        </main>
        <CommandPanel />
      </div>
      <StatusBar />
      <Notes />
      <Recorder />
    </div>
  );
}
